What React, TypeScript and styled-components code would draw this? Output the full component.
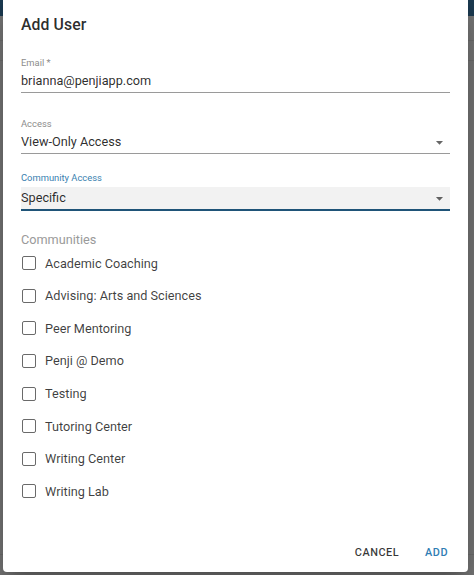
import React from "react";
import styled, { createGlobalStyle } from "styled-components";

const Global = createGlobalStyle`
  html, body { margin: 0; padding: 0; }
  body {
    width: 474px;
    height: 575px;
    overflow: hidden;
    background: #7a7a7a;
    font-family: Roboto, "Liberation Sans", Arial, sans-serif;
  }
`;

const Page = styled.div`
  position: relative;
  width: 474px;
  height: 575px;
  display: flex;
  flex-direction: column;
`;

const AppBar = styled.div`
  height: 16px;
  background: #1d3c53;
`;

const PageRule = styled.div<{ $gap: number }>`
  margin-top: ${(p) => p.$gap}px;
  height: 1px;
  background: #707070;
`;

const Dialog = styled.div`
  position: absolute;
  left: 3px;
  top: -4px;
  width: 465px;
  height: 576px;
  box-sizing: border-box;
  background: #fff;
  border-radius: 4px;
  box-shadow: 0 11px 15px -7px rgba(0, 0, 0, 0.2), 0 24px 38px 3px rgba(0, 0, 0, 0.14),
    0 9px 46px 8px rgba(0, 0, 0, 0.12);
  display: flex;
  flex-direction: column;
  padding: 0 18px;
  color: rgba(0, 0, 0, 0.84);
`;

const Title = styled.h2`
  margin: 17px 0 0;
  font-size: 15.8px;
  line-height: 24px;
  font-weight: 500;
  letter-spacing: 0.1px;
`;

const Field = styled.div<{ $mt: number }>`
  display: flex;
  flex-direction: column;
  margin-top: ${(p) => p.$mt}px;
`;

const Label = styled.label<{ $focused?: boolean }>`
  font-size: 9.4px;
  line-height: 12px;
  color: ${(p) => (p.$focused ? "#3a7fb0" : "#8c8c8c")};
  margin-bottom: ${(p) => (p.$focused ? 3 : 1)}px;
`;

const InputRow = styled.div<{ $filled?: boolean }>`
  display: flex;
  align-items: center;
  justify-content: space-between;
  height: 22px;
  font-size: 12.7px;
  line-height: 22px;
  background: ${(p) => (p.$filled ? "#f2f2f2" : "transparent")};
  border-bottom: ${(p) => (p.$filled ? "2px solid #1f5478" : "1px solid #9a9a9a")};
`;

const Arrow = styled.svg`
  width: 17px;
  height: 17px;
  margin-right: 2px;
  fill: rgba(0, 0, 0, 0.6);
`;

const GroupLabel = styled.div`
  margin-top: 21px;
  font-size: 12.7px;
  line-height: 16px;
  color: #9a9a9a;
`;

const List = styled.div`
  display: flex;
  flex-direction: column;
  margin-top: -1px;
`;

const Row = styled.label`
  display: flex;
  align-items: center;
  height: 32.57px;
  font-size: 12.7px;
  color: rgba(0, 0, 0, 0.76);
`;

const Box = styled.span`
  box-sizing: border-box;
  width: 14px;
  height: 14px;
  margin-left: 1px;
  margin-right: 9px;
  border: 1.7px solid #6a6a6a;
  border-radius: 2px;
`;

const Spacer = styled.div`
  flex: 1;
`;

const Actions = styled.div`
  display: flex;
  justify-content: flex-end;
  gap: 26px;
  padding: 0 2px 12px 0;
`;

const Button = styled.button<{ $primary?: boolean }>`
  border: none;
  background: transparent;
  padding: 0;
  font-family: inherit;
  font-size: 10.9px;
  line-height: 14px;
  font-weight: 500;
  letter-spacing: 0.5px;
  text-transform: uppercase;
  color: ${(p) => (p.$primary ? "#2f7db3" : "rgba(0,0,0,0.78)")};
`;

const communities = [
  "Academic Coaching",
  "Advising: Arts and Sciences",
  "Peer Mentoring",
  "Penji @ Demo",
  "Testing",
  "Tutoring Center",
  "Writing Center",
  "Writing Lab",
];

const DropArrow = () => (
  <Arrow viewBox="0 0 24 24">
    <path d="M7 10l5 5 5-5z" />
  </Arrow>
);

export default function App() {
  return (
    <>
      <Global />
      <Page>
        <AppBar />
        <PageRule $gap={24} />
        <PageRule $gap={19} />
        <PageRule $gap={493} />
        <Dialog>
          <Title>Add User</Title>
          <Field $mt={20}>
            <Label>Email *</Label>
            <InputRow>brianna@penjiapp.com</InputRow>
          </Field>
          <Field $mt={25}>
            <Label>Access</Label>
            <InputRow>
              View-Only Access
              <DropArrow />
            </InputRow>
          </Field>
          <Field $mt={18}>
            <Label $focused>Community Access</Label>
            <InputRow $filled>
              Specific
              <DropArrow />
            </InputRow>
          </Field>
          <GroupLabel>Communities</GroupLabel>
          <List>
            {communities.map((c) => (
              <Row key={c}>
                <Box />
                {c}
              </Row>
            ))}
          </List>
          <Spacer />
          <Actions>
            <Button>Cancel</Button>
            <Button $primary>Add</Button>
          </Actions>
        </Dialog>
      </Page>
    </>
  );
}
